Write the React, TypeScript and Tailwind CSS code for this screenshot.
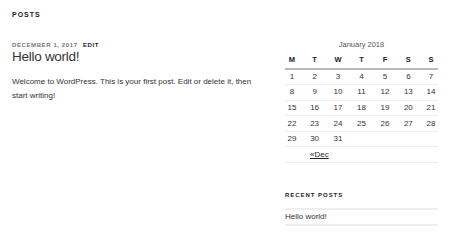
import React from "react";

const weeks: (number | null)[][] = [
  [1, 2, 3, 4, 5, 6, 7],
  [8, 9, 10, 11, 12, 13, 14],
  [15, 16, 17, 18, 19, 20, 21],
  [22, 23, 24, 25, 26, 27, 28],
  [29, 30, 31, null, null, null, null],
];

const days = ["M", "T", "W", "T", "F", "S", "S"];

function cellPad(i: number) {
  if (i === 0) return "pl-0 pr-[4px]";
  if (i === 6) return "pl-[4px] pr-0";
  return "px-[4px]";
}

export default function App() {
  return (
    <div
      className="w-[454px] h-[240px] bg-white text-[#333] overflow-hidden pl-[12px] pr-[16px]"
      style={{ fontFamily: '"Liberation Sans", Arial, sans-serif' }}
    >
      <h2 className="pt-[11px] text-[7px] leading-[8px] font-bold tracking-[0.14em] text-[#222] uppercase">
        Posts
      </h2>
      <div className="flex mt-[22px]">
        <main className="w-[255px]">
          <div className="text-[6px] leading-[8px] font-bold tracking-[0.1em] uppercase text-[#767676]">
            December 1, 2017 <span className="ml-[3px] text-[#222]">Edit</span>
          </div>
          <h1 className="-mt-[1px] text-[13.5px] leading-[18px] font-light text-[#333] tracking-[-0.02em]">
            Hello world!
          </h1>
          <p className="mt-[9px] text-[8px] leading-[14px] text-[#333]">
            Welcome to WordPress. This is your first post. Edit or delete it, then start writing!
          </p>
        </main>
        <aside className="ml-auto w-[153px] -mt-[2px]">
          <table className="w-full border-collapse text-[8px]">
            <caption className="text-[7.5px] leading-[12px] text-[#555] text-center">
              January 2018
            </caption>
            <thead>
              <tr className="border-b-2 border-[#bbb]">
                {days.map((d, i) => (
                  <th
                    key={i}
                    className={`${cellPad(i)} h-[18px] text-center font-bold text-[#222] text-[7.5px]`}
                  >
                    {d}
                  </th>
                ))}
              </tr>
            </thead>
            <tbody>
              {weeks.map((w, r) => (
                <tr key={r} className="border-b border-[#eee]">
                  {w.map((n, i) => (
                    <td
                      key={i}
                      className={`${cellPad(i)} h-[15.6px] text-center text-[#333]`}
                    >
                      {n ?? ""}
                    </td>
                  ))}
                </tr>
              ))}
              <tr className="border-b border-[#eee]">
                <td colSpan={3} className="h-[16px] text-center pl-[4px]">
                  <span className="underline text-[#222]">«Dec</span>
                </td>
                <td colSpan={4} />
              </tr>
            </tbody>
          </table>
          <h2 className="mt-[28px] text-[6px] leading-[8px] font-bold tracking-[0.16em] uppercase text-[#222]">
            Recent Posts
          </h2>
          <div className="mt-[9px] border-t-2 border-[#eee]">
            <div className="h-[16px] flex items-center text-[8px] text-[#333] border-b-2 border-[#eee]">
              Hello world!
            </div>
          </div>
        </aside>
      </div>
    </div>
  );
}
